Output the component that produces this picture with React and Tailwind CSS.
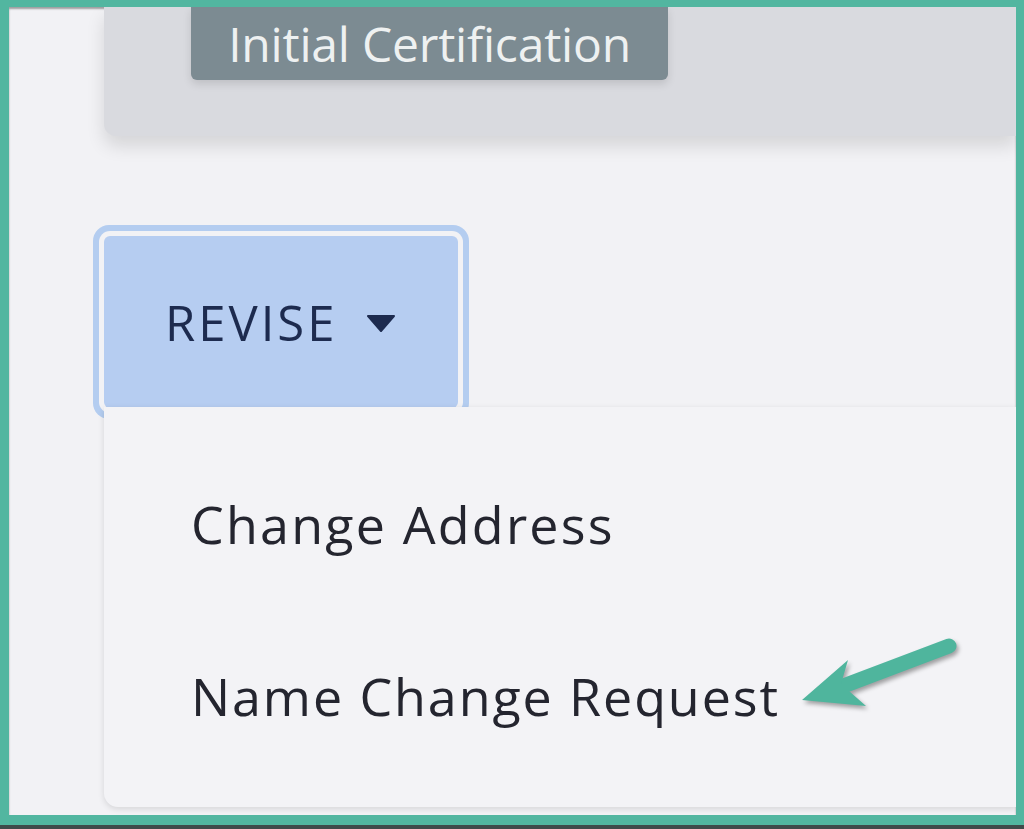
import React from "react";

function Arrow() {
  return (
    <svg
      className="absolute left-[779px] top-[612px] drop-shadow-[2px_3px_2px_rgba(0,0,0,0.35)]"
      width="180"
      height="95"
      viewBox="0 0 180 95"
      fill="none"
    >
      {/* shaft */}
      <line x1="161" y1="27" x2="50" y2="69" stroke="#4fb59d" strokeWidth="15" strokeLinecap="round" />
      {/* head */}
      <polygon points="14,81 60,41 53,65 78,87" fill="#4fb59d" strokeLinejoin="round" />
    </svg>
  );
}

export default function App() {
  return (
    <div className="w-[1024px] h-[829px] bg-[#3f4a4a] font-['Open_Sans','Noto_Sans',sans-serif]">
      <div className="h-[825px] bg-[#52b6a0] pt-[7px] pl-[9px] pr-[8px] pb-[10px]">
        <div className="relative h-full overflow-hidden bg-[#f2f2f5] shadow-[inset_0_2px_2px_rgba(0,0,0,0.35)] pl-[95px]">
          {/* top card */}
          <div className="h-[129px] rounded-bl-[12px] bg-[#d9dadf] pl-[87px] shadow-[0_10px_18px_rgba(0,0,0,0.12)]">
            <div className="flex h-[73px] w-[477px] items-center justify-center rounded-b-[6px] bg-[#7c8b92] shadow-[0_4px_8px_rgba(0,0,0,0.12)]">
              <span className="text-[48px] leading-none text-[#eef1f1] tracking-[-0.2px]">Initial Certification</span>
            </div>
          </div>

          {/* revise button */}
          <div className="mt-[100px] w-[354px] h-[172px] rounded-[6px] bg-[#b6cdf1] ring-[6px] ring-[#b4cdf0] ring-offset-[5px] ring-offset-[#f2f2f5] flex items-center pl-[61px] gap-[30px]">
            <span className="text-[49px] leading-none text-[#1d2b4f] tracking-[3px]">REVISE</span>
            <svg width="28" height="17" viewBox="0 0 28 17" className="mt-[2px]">
              <polygon points="1,1 27,1 14,16" fill="#1d2b4f" strokeLinejoin="round" stroke="#1d2b4f" strokeWidth="2" />
            </svg>
          </div>

          {/* dropdown menu */}
          <div className="relative -mt-[1px] h-[400px] rounded-bl-[14px] bg-[#f3f3f6] shadow-[0_2px_6px_rgba(0,0,0,0.12)] pl-[87px] pt-[85px] text-[#24252f] tracking-[2.2px]">
            <div className="text-[52px] leading-[64px]">Change Address</div>
            <div className="mt-[108px] text-[52px] leading-[64px] tracking-[1.9px]">Name Change Request</div>
          </div>

          <Arrow />
        </div>
      </div>
    </div>
  );
}
